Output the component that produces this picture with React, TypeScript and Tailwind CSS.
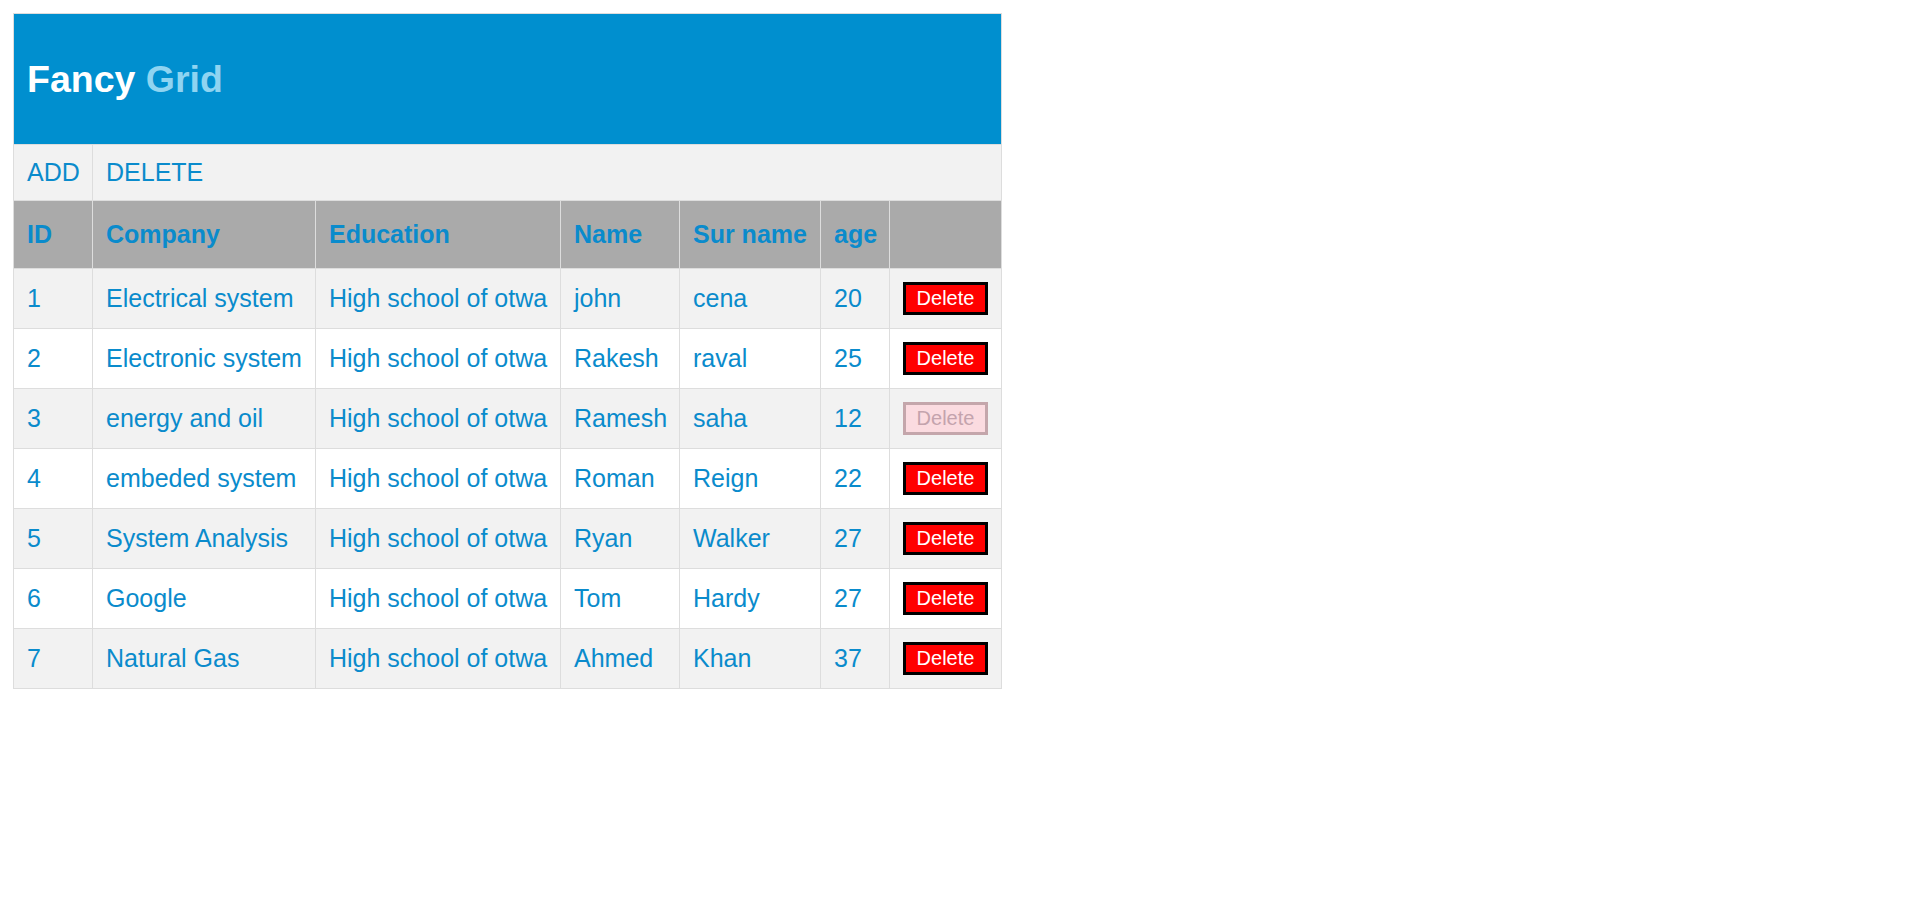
type Row = {
  id: number;
  company: string;
  education: string;
  name: string;
  surname: string;
  age: number;
  disabled?: boolean;
};

const rows: Row[] = [
  { id: 1, company: "Electrical system", education: "High school of otwa", name: "john", surname: "cena", age: 20 },
  { id: 2, company: "Electronic system", education: "High school of otwa", name: "Rakesh", surname: "raval", age: 25 },
  { id: 3, company: "energy and oil", education: "High school of otwa", name: "Ramesh", surname: "saha", age: 12, disabled: true },
  { id: 4, company: "embeded system", education: "High school of otwa", name: "Roman", surname: "Reign", age: 22 },
  { id: 5, company: "System Analysis", education: "High school of otwa", name: "Ryan", surname: "Walker", age: 27 },
  { id: 6, company: "Google", education: "High school of otwa", name: "Tom", surname: "Hardy", age: 27 },
  { id: 7, company: "Natural Gas", education: "High school of otwa", name: "Ahmed", surname: "Khan", age: 37 },
];

const headers = ["ID", "Company", "Education", "Name", "Sur name", "age", ""];

export default function App() {
  return (
    <div
      className="min-h-[901px] bg-white p-[13px] text-[25px] text-[#0a8bcc]"
      style={{ fontFamily: '"Liberation Sans", Arial, sans-serif' }}
    >
      <table className="w-[989px] table-fixed border-collapse border border-[#dddddd]">
        <colgroup>
          <col className="w-[79px]" />
          <col className="w-[223px]" />
          <col className="w-[245px]" />
          <col className="w-[119px]" />
          <col className="w-[141px]" />
          <col className="w-[69px]" />
          <col className="w-[112px]" />
        </colgroup>
        <tbody>
          {/* Title */}
          <tr>
            <td colSpan={7} className="h-[131px] border border-[#dddddd] bg-[#008fcf] pl-[13px] text-left align-middle">
              <span className="text-[37.5px] font-bold text-white">Fancy </span>
              <span className="text-[37.5px] font-bold text-[#8fd4f1]">Grid</span>
            </td>
          </tr>

          {/* Toolbar */}
          <tr className="bg-[#f2f2f2]">
            <td className="h-[56px] border border-[#dddddd] pl-[13px] align-middle">ADD</td>
            <td colSpan={6} className="border border-[#dddddd] pl-[13px] align-middle">DELETE</td>
          </tr>

          {/* Header */}
          <tr className="bg-[#aaaaaa]">
            {headers.map((h, i) => (
              <th
                key={i}
                className="h-[68px] border border-[#dddddd] pl-[13px] text-left align-middle font-bold whitespace-nowrap"
              >
                {h}
              </th>
            ))}
          </tr>

          {rows.map((r, i) => (
            <tr key={r.id} className={i % 2 === 0 ? "bg-[#f2f2f2]" : "bg-white"}>
              <td className="h-[60px] border border-[#dddddd] pl-[13px] align-middle">{r.id}</td>
              <td className="border border-[#dddddd] pl-[13px] align-middle whitespace-nowrap">{r.company}</td>
              <td className="border border-[#dddddd] pl-[13px] align-middle whitespace-nowrap">{r.education}</td>
              <td className="border border-[#dddddd] pl-[13px] align-middle whitespace-nowrap">{r.name}</td>
              <td className="border border-[#dddddd] pl-[13px] align-middle whitespace-nowrap">{r.surname}</td>
              <td className="border border-[#dddddd] pl-[13px] align-middle">{r.age}</td>
              <td className="border border-[#dddddd] pl-[13px] align-middle">
                {r.disabled ? (
                  <button
                    disabled
                    className="block h-[33px] w-[85px] border-[3px] border-[#c4a6ab] bg-[#fbdbe0] text-center text-[20px] leading-[27px] text-[#c4a3ad]"
                  >
                    Delete
                  </button>
                ) : (
                  <button className="block h-[33px] w-[85px] border-[3px] border-black bg-[#ff0000] text-center text-[20px] leading-[27px] text-white">
                    Delete
                  </button>
                )}
              </td>
            </tr>
          ))}
        </tbody>
      </table>
    </div>
  );
}
